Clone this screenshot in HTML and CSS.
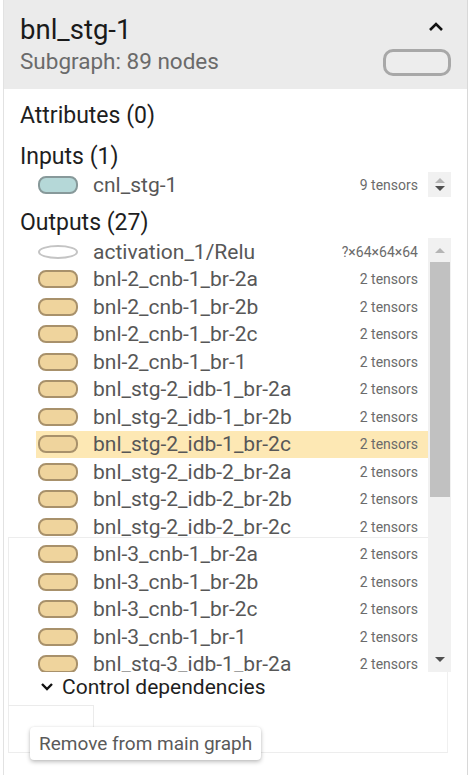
FILE: index.html
```html
<!DOCTYPE html>
<html>
<head>
<meta charset="utf-8">
<link rel="stylesheet" href="styles.css">
</head>
<body>
<div class="panel">
  <div class="bg-lines">
    <div class="bg-rect"></div>
    <div class="bg-box"></div>
  </div>
  <div class="header">
    <div class="titles">
      <div class="title">bnl_stg-1</div>
      <div class="subtitle">Subgraph: 89 nodes</div>
    </div>
    <div class="header-right">
      <svg class="caret" width="16" height="10" viewBox="0 0 16 10"><path d="M2 9 L8 3 L14 9" fill="none" stroke="#111" stroke-width="2.6"/></svg>
      <div class="expand-pill"></div>
    </div>
  </div>
  <div class="body">
    <div class="section-title st-attr">Attributes (0)</div>
    <div class="section-title">Inputs (1)</div>
    <div class="list list-in">
      <div class="rows">
        <div class="row"><span class="pill pill-in"></span><span class="name">cnl_stg-1</span><span class="count">9 tensors</span></div>
      </div>
      <div class="sbar sbar-small">
        <svg width="12" height="8" viewBox="0 0 12 8"><path d="M1 7 L6 2 L11 7Z" fill="#b5b5b5"/></svg>
        <svg width="12" height="8" viewBox="0 0 12 8"><path d="M1 1 L6 6 L11 1Z" fill="#505050"/></svg>
      </div>
    </div>
    <div class="section-title st-out">Outputs (27)</div>
    <div class="list list-out">
      <div class="rows rows-out">
        <div class="row"><span class="pill pill-op"></span><span class="name">activation_1/Relu</span><span class="count">?×64×64×64</span></div>
        <div class="row"><span class="pill"></span><span class="name">bnl-2_cnb-1_br-2a</span><span class="count">2 tensors</span></div>
        <div class="row"><span class="pill"></span><span class="name">bnl-2_cnb-1_br-2b</span><span class="count">2 tensors</span></div>
        <div class="row"><span class="pill"></span><span class="name">bnl-2_cnb-1_br-2c</span><span class="count">2 tensors</span></div>
        <div class="row"><span class="pill"></span><span class="name">bnl-2_cnb-1_br-1</span><span class="count">2 tensors</span></div>
        <div class="row"><span class="pill"></span><span class="name">bnl_stg-2_idb-1_br-2a</span><span class="count">2 tensors</span></div>
        <div class="row"><span class="pill"></span><span class="name">bnl_stg-2_idb-1_br-2b</span><span class="count">2 tensors</span></div>
        <div class="row row-hl"><span class="pill"></span><span class="name">bnl_stg-2_idb-1_br-2c</span><span class="count">2 tensors</span></div>
        <div class="row"><span class="pill"></span><span class="name">bnl_stg-2_idb-2_br-2a</span><span class="count">2 tensors</span></div>
        <div class="row"><span class="pill"></span><span class="name">bnl_stg-2_idb-2_br-2b</span><span class="count">2 tensors</span></div>
        <div class="row"><span class="pill"></span><span class="name">bnl_stg-2_idb-2_br-2c</span><span class="count">2 tensors</span></div>
        <div class="row"><span class="pill"></span><span class="name">bnl-3_cnb-1_br-2a</span><span class="count">2 tensors</span></div>
        <div class="row"><span class="pill"></span><span class="name">bnl-3_cnb-1_br-2b</span><span class="count">2 tensors</span></div>
        <div class="row"><span class="pill"></span><span class="name">bnl-3_cnb-1_br-2c</span><span class="count">2 tensors</span></div>
        <div class="row"><span class="pill"></span><span class="name">bnl-3_cnb-1_br-1</span><span class="count">2 tensors</span></div>
        <div class="row"><span class="pill"></span><span class="name">bnl_stg-3_idb-1_br-2a</span><span class="count">2 tensors</span></div>
      </div>
      <div class="sbar sbar-big">
        <div class="sb-btn"><svg width="12" height="8" viewBox="0 0 12 8"><path d="M1 7 L6 2 L11 7Z" fill="#b5b5b5"/></svg></div>
        <div class="sb-track"><div class="sb-thumb"></div></div>
        <div class="sb-btn"><svg width="12" height="8" viewBox="0 0 12 8"><path d="M1 1 L6 6 L11 1Z" fill="#505050"/></svg></div>
      </div>
    </div>
    <div class="control">
      <svg width="14" height="10" viewBox="0 0 14 10"><path d="M2 2 L7 7 L12 2" fill="none" stroke="#111" stroke-width="2.4"/></svg>
      <span>Control dependencies</span>
    </div>
  </div>
  <div class="tooltip">Remove from main graph</div>
</div>
</body>
</html>
```
FILE: styles.css
```css
html, body {
  margin: 0;
  padding: 0;
  background: #ffffff;
}
body {
  font-family: Roboto, "Noto Sans", "Liberation Sans", sans-serif;
  width: 474px;
  height: 775px;
  overflow: hidden;
}
.panel {
  position: relative;
  margin-left: 3px;
  width: 465px;
  height: 775px;
  border-left: 1px solid #e2e2e2;
  border-right: 1px solid #d8d8d8;
  background: #ffffff;
  box-sizing: border-box;
}
.bg-lines {
  position: absolute;
  inset: 0;
  pointer-events: none;
}
.bg-rect {
  position: absolute;
  left: 4px;
  top: 537px;
  width: 438px;
  height: 214px;
  border: 1px solid #ededed;
  border-right-color: #f0f0f0;
}
.bg-box {
  position: absolute;
  left: 4px;
  top: 705px;
  width: 85px;
  height: 30px;
  border-top: 1px solid #ebebeb;
  border-right: 1px solid #ebebeb;
}
.header {
  position: relative;
  background: #ebebeb;
  height: 89px;
  display: flex;
  justify-content: space-between;
  padding: 14px 16px 0 16px;
  box-sizing: border-box;
}
.title {
  font-size: 27.5px;
  color: #1a1a1a;
  line-height: 32px;
}
.subtitle {
  font-size: 22.5px;
  color: #6a6a6a;
  line-height: 30px;
}
.header-right {
  display: flex;
  flex-direction: column;
  align-items: flex-end;
  padding-top: 7px;
}
.caret {
  margin-right: 7px;
}
.expand-pill {
  margin-top: 18px;
  width: 62px;
  height: 21px;
  border: 3px solid #a8a8a8;
  border-radius: 10px;
  background: #ededed;
}
.body {
  position: relative;
  display: flex;
  flex-direction: column;
  padding: 13px 0 0 16px;
}
.section-title {
  font-size: 23px;
  color: #1e1e1e;
  line-height: 28px;
  height: 28px;
}
.st-attr {
  margin-bottom: 13px;
}
.st-out {
  margin-top: 12px;
}
.list {
  display: flex;
  margin-left: 16px;
  width: 415px;
  margin-top: 1px;
}
.list-in {
  height: 25px;
}
.rows {
  flex: 1;
  min-width: 0;
}
.list-out {
  height: 434px;
  overflow: hidden;
}
.rows-out {
  height: 434px;
  overflow: hidden;
}
.row {
  display: flex;
  align-items: center;
  height: 27.5px;
  padding-left: 2px;
  padding-right: 10px;
}
.list-in .row {
  height: 25px;
}
.row-hl {
  background: #fde8b4;
}
.pill {
  flex: none;
  width: 40px;
  height: 18px;
  box-sizing: border-box;
  border: 2px solid #a8916b;
  border-radius: 8px;
  background: #efd49d;
}
.pill-in {
  background: #b5d8d8;
  border-color: #87999a;
}
.pill-op {
  height: 14px;
  border-radius: 50%;
  background: #ffffff;
  border: 2px solid #c4c4c4;
}
.name {
  flex: 1;
  margin-left: 15px;
  font-size: 21px;
  color: #575757;
  white-space: nowrap;
  overflow: hidden;
}
.count {
  flex: none;
  font-size: 14px;
  color: #6b6b6b;
}
.sbar {
  flex: none;
  width: 23px;
  background: #f1f1f1;
  display: flex;
  flex-direction: column;
  align-items: center;
}
.sbar-small {
  height: 25px;
  justify-content: center;
  gap: 1px;
}
.sbar-big {
  height: 434px;
}
.sb-btn {
  height: 24px;
  width: 100%;
  display: flex;
  align-items: center;
  justify-content: center;
  flex: none;
}
.sb-track {
  flex: 1;
  width: 100%;
  display: flex;
  justify-content: center;
}
.sb-thumb {
  width: 20px;
  height: 235px;
  background: #c1c1c1;
}
.control {
  display: flex;
  align-items: center;
  margin-left: 20px;
  margin-top: 1px;
  font-size: 21px;
  color: #1e1e1e;
  height: 28px;
}
.control svg {
  margin-right: 8px;
}
.tooltip {
  position: absolute;
  left: 26px;
  top: 727px;
  height: 33px;
  padding: 0 9px;
  display: flex;
  align-items: center;
  background: #ffffff;
  font-size: 19px;
  color: #5a5a5a;
  border-radius: 4px;
  box-shadow: 0 2px 4px rgba(0,0,0,0.25), 0 0 2px rgba(0,0,0,0.08);
}
```
